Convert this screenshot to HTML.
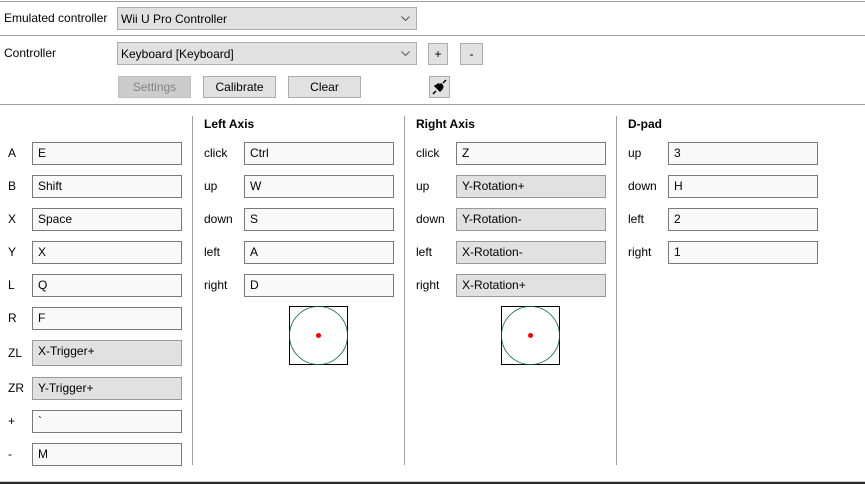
<!DOCTYPE html>
<html><head><meta charset="utf-8"><style>
*{box-sizing:border-box;margin:0;padding:0}
body{width:865px;height:484px;background:#fff;position:relative;overflow:hidden;font-family:"Liberation Sans",sans-serif;font-size:12px;color:#000}
.a{position:absolute}
.hl{position:absolute;left:0;width:865px;height:1px;background:#a0a0a0}
.vl{position:absolute;top:116px;width:1px;height:349px;background:#a0a0a0}
.lb{position:absolute;line-height:14px}
.in{position:absolute;width:150px;height:23px;border:1px solid #7a7a7a;background:#f9f9f9;padding:3px 0 0 5px;line-height:14px}
.g{background:#e1e1e1;border-color:#999}
.cb{position:absolute;height:23px;border:1px solid #adadad;background:#e1e1e1;padding:4px 0 0 3px;line-height:14px}
.cb svg{position:absolute;right:6px;top:8px}
.bt{position:absolute;height:22px;border:1px solid #adadad;background:#e1e1e1;text-align:center;line-height:20px}
.h{position:absolute;font-weight:bold;top:117px}
</style></head><body>
<div class="hl" style="top:1px"></div>
<div class="lb" style="left:4px;top:11px">Emulated controller</div>
<div class="cb" style="left:117px;top:7px;width:300px">Wii U Pro Controller<svg width="9" height="6"><path d="M0.5 0.5L4.5 4.5L8.5 0.5" stroke="#555" fill="none"/></svg></div>
<div class="hl" style="top:35px"></div>
<div class="lb" style="left:4px;top:46px">Controller</div>
<div class="cb" style="left:117px;top:42px;width:300px">Keyboard [Keyboard]<svg width="9" height="6"><path d="M0.5 0.5L4.5 4.5L8.5 0.5" stroke="#555" fill="none"/></svg></div>
<div class="bt" style="left:428px;top:43px;width:20px">+</div>
<div class="bt" style="left:460px;top:43px;width:23px">-</div>
<div class="bt" style="left:118px;top:76px;width:73px;color:#838383;background:#cccccc;border-color:#bfbfbf">Settings</div>
<div class="bt" style="left:203px;top:76px;width:73px">Calibrate</div>
<div class="bt" style="left:288px;top:76px;width:73px">Clear</div>
<div class="bt" style="left:429px;top:76px;width:21px;height:22px"><svg width="19" height="20" viewBox="0 0 19 20" style="position:absolute;left:0;top:0"><path d="M3 17L6 14M13 6L16 3M5 9L10 14L12 12Q14 9 11 7L10 8Q8 6 7 8Z" stroke="#000" stroke-width="1.5" fill="#000"/></svg></div>
<div class="hl" style="top:104px"></div>

<div class="vl" style="left:192px"></div>
<div class="vl" style="left:404px"></div>
<div class="vl" style="left:616px"></div>

<div class="lb" style="left:8px;top:146px">A</div><div class="in" style="left:32px;top:142px">E</div>
<div class="lb" style="left:8px;top:179px">B</div><div class="in" style="left:32px;top:175px">Shift</div>
<div class="lb" style="left:8px;top:212px">X</div><div class="in" style="left:32px;top:208px">Space</div>
<div class="lb" style="left:8px;top:245px">Y</div><div class="in" style="left:32px;top:241px">X</div>
<div class="lb" style="left:8px;top:278px">L</div><div class="in" style="left:32px;top:274px">Q</div>
<div class="lb" style="left:8px;top:311px">R</div><div class="in" style="left:32px;top:307px">F</div>
<div class="lb" style="left:8px;top:346px">ZL</div><div class="in g" style="left:32px;top:340px;height:26px">X-Trigger+</div>
<div class="lb" style="left:8px;top:381px">ZR</div><div class="in g" style="left:32px;top:377px">Y-Trigger+</div>
<div class="lb" style="left:8px;top:414px">+</div><div class="in" style="left:32px;top:410px">`</div>
<div class="lb" style="left:8px;top:447px">-</div><div class="in" style="left:32px;top:443px">M</div>

<div class="h" style="left:204px">Left Axis</div>
<div class="lb" style="left:204px;top:146px">click</div><div class="in" style="left:244px;top:142px">Ctrl</div>
<div class="lb" style="left:204px;top:179px">up</div><div class="in" style="left:244px;top:175px">W</div>
<div class="lb" style="left:204px;top:212px">down</div><div class="in" style="left:244px;top:208px">S</div>
<div class="lb" style="left:204px;top:245px">left</div><div class="in" style="left:244px;top:241px">A</div>
<div class="lb" style="left:204px;top:278px">right</div><div class="in" style="left:244px;top:274px">D</div>
<svg class="a" style="left:289px;top:306px" width="60" height="60"><rect x="0.5" y="0.5" width="58" height="58" fill="#fff" stroke="#000"/><circle cx="29.5" cy="29.5" r="29" fill="none" stroke="#006633" stroke-width="0.8"/><circle cx="29.5" cy="29.5" r="2.5" fill="#f00"/></svg>

<div class="h" style="left:416px">Right Axis</div>
<div class="lb" style="left:416px;top:146px">click</div><div class="in" style="left:456px;top:142px">Z</div>
<div class="lb" style="left:416px;top:179px">up</div><div class="in g" style="left:456px;top:175px">Y-Rotation+</div>
<div class="lb" style="left:416px;top:212px">down</div><div class="in g" style="left:456px;top:208px">Y-Rotation-</div>
<div class="lb" style="left:416px;top:245px">left</div><div class="in g" style="left:456px;top:241px">X-Rotation-</div>
<div class="lb" style="left:416px;top:278px">right</div><div class="in g" style="left:456px;top:274px">X-Rotation+</div>
<svg class="a" style="left:501px;top:306px" width="60" height="60"><rect x="0.5" y="0.5" width="58" height="58" fill="#fff" stroke="#000"/><circle cx="29.5" cy="29.5" r="29" fill="none" stroke="#006633" stroke-width="0.8"/><circle cx="29.5" cy="29.5" r="2.5" fill="#f00"/></svg>

<div class="h" style="left:628px">D-pad</div>
<div class="lb" style="left:628px;top:146px">up</div><div class="in" style="left:668px;top:142px">3</div>
<div class="lb" style="left:628px;top:179px">down</div><div class="in" style="left:668px;top:175px">H</div>
<div class="lb" style="left:628px;top:212px">left</div><div class="in" style="left:668px;top:208px">2</div>
<div class="lb" style="left:628px;top:245px">right</div><div class="in" style="left:668px;top:241px">1</div>

<div class="a" style="left:0;top:481px;width:865px;height:1px;background:#d0d0d0"></div>
<div class="a" style="left:0;top:482px;width:865px;height:2px;background:#2b2b2b"></div>
</body></html>
